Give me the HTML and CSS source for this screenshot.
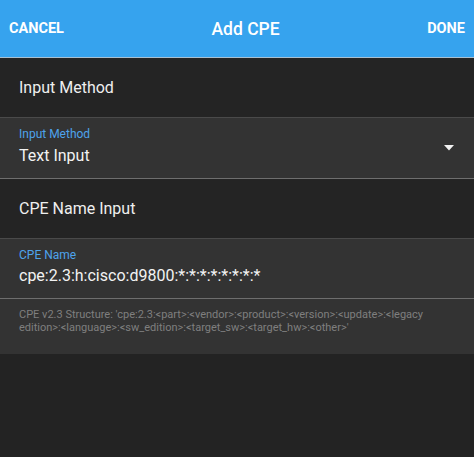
FILE: index.html
```html
<!DOCTYPE html>
<html>
<head>
<meta charset="utf-8">
<link rel="stylesheet" href="styles.css">
</head>
<body>
<div class="app">
  <header class="bar">
    <span class="bar-btn">CANCEL</span>
    <span class="bar-title">Add CPE</span>
    <span class="bar-btn">DONE</span>
  </header>
  <div class="section">Input Method</div>
  <div class="field select">
    <div class="field-body">
      <div class="label">Input Method</div>
      <div class="value">Text Input</div>
    </div>
    <svg class="caret" width="10" height="6" viewBox="0 0 10 6"><path d="M0 0 L10 0 L5 5.5 Z" fill="#f2f2f2"/></svg>
  </div>
  <div class="section">CPE Name Input</div>
  <div class="field input">
    <div class="field-body">
      <div class="label">CPE Name</div>
      <div class="value">cpe:2.3:h:cisco:d9800:*:*:*:*:*:*:*:*</div>
    </div>
  </div>
  <div class="helper">CPE v2.3 Structure: 'cpe:2.3:&lt;part&gt;:&lt;vendor&gt;:&lt;product&gt;:&lt;version&gt;:&lt;update&gt;:&lt;legacy edition&gt;:&lt;language&gt;:&lt;sw_edition&gt;:&lt;target_sw&gt;:&lt;target_hw&gt;:&lt;other&gt;'</div>
</div>
</body>
</html>
```
FILE: styles.css
```css
html, body {
  margin: 0;
  padding: 0;
  background: #232323;
}
.app {
  width: 474px;
  height: 457px;
  background: #232323;
  font-family: Roboto, "Liberation Sans", sans-serif;
  color: #f0f0f0;
  overflow: hidden;
}
.bar {
  height: 57px;
  background: #36a3ee;
  border-bottom: 1px solid #a8c0d2;
  display: flex;
  align-items: center;
  justify-content: space-between;
  padding: 0 9px;
  color: #ffffff;
}
.bar-btn {
  font-size: 14.5px;
  font-weight: 700;
  line-height: 20px;
  padding-top: 1px;
}
.bar-title {
  font-size: 17.5px;
  font-weight: 500;
  line-height: 22px;
}
.section {
  height: 59px;
  display: flex;
  align-items: center;
  padding: 0 19px;
  font-size: 16px;
  border-bottom: 1px solid #4a4a4a;
  background: #242424;
  color: #efefef;
}
.field {
  background: #333333;
  border-bottom: 1px solid #6e6e6e;
  display: flex;
  align-items: center;
  padding: 0 19px;
  box-sizing: border-box;
}
.select {
  height: 61px;
}
.input {
  height: 60px;
}
.field-body {
  flex: 1;
  align-self: flex-start;
  padding-top: 9px;
  display: flex;
  flex-direction: column;
}
.label {
  font-size: 12px;
  line-height: 14px;
  color: #4ea3ec;
}
.value {
  font-size: 16px;
  line-height: 22px;
  margin-top: 4px;
  color: #f2f2f2;
}
.input .value {
  margin-top: 3px;
}
.caret {
  margin-right: 1px;
}
.helper {
  background: #333333;
  height: 55px;
  box-sizing: border-box;
  padding: 10px 19px 0 19px;
  font-size: 11px;
  line-height: 12.5px;
  color: #7f7f7f;
}
```
